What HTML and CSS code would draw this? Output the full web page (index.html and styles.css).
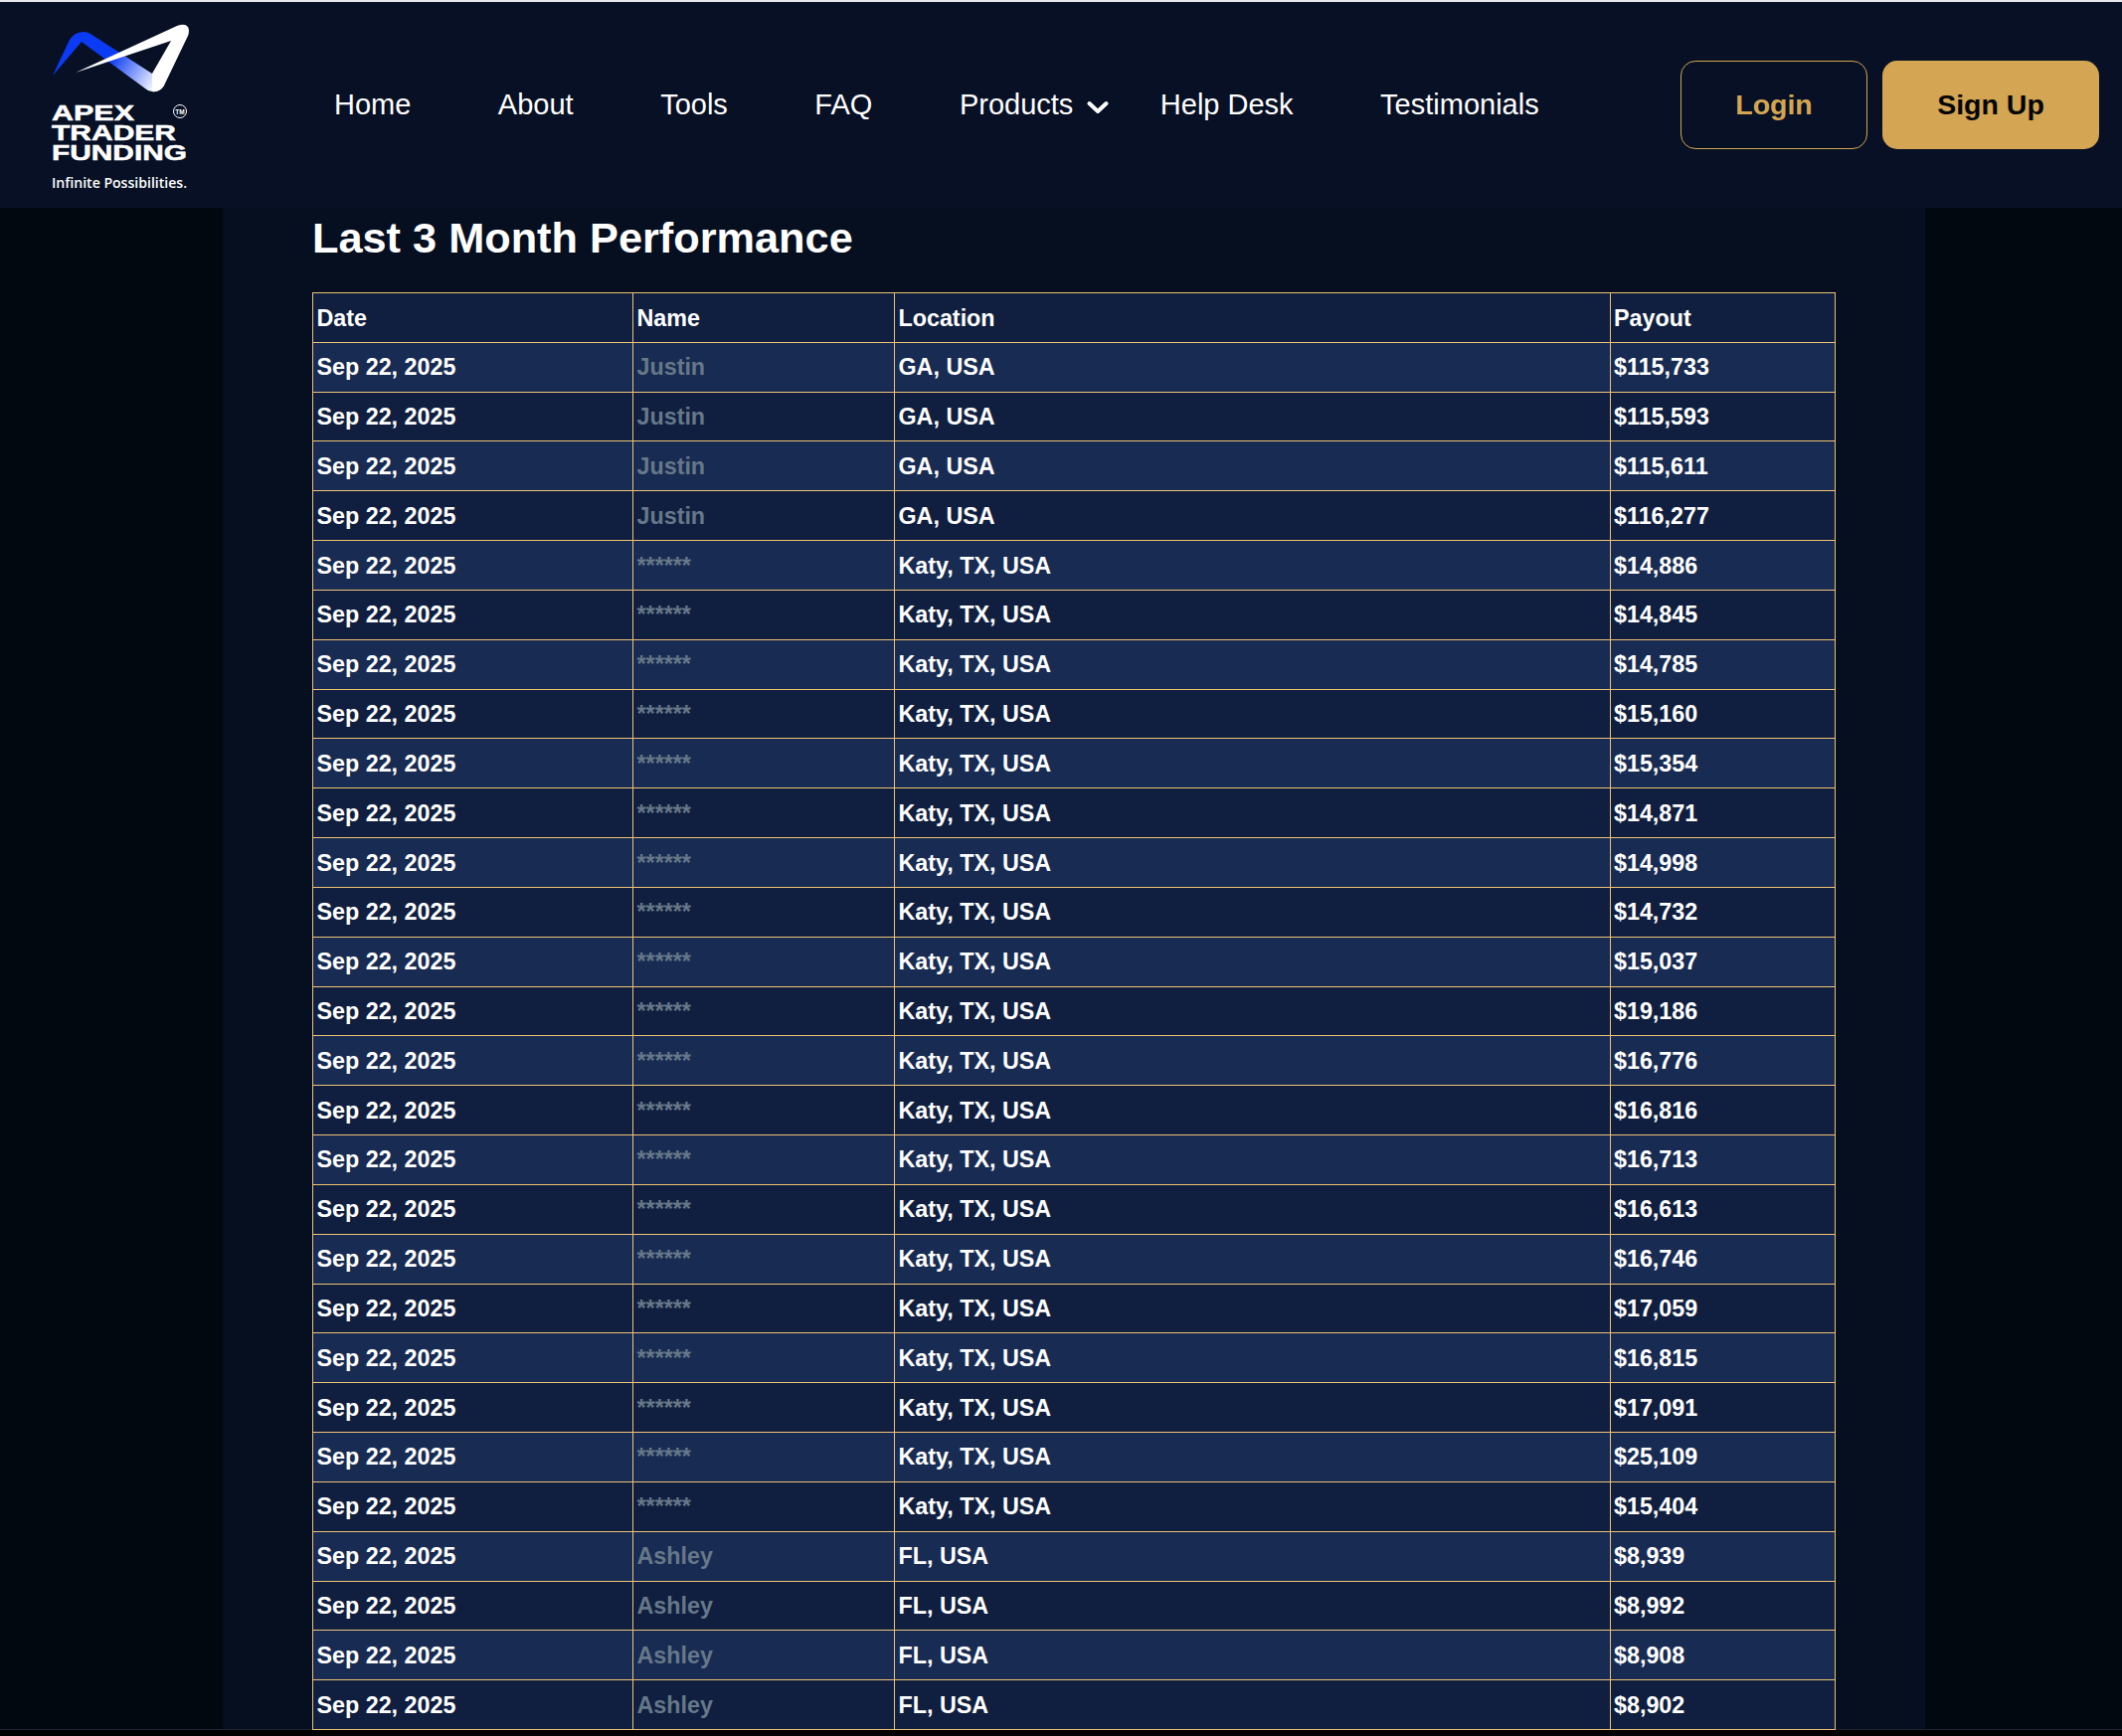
FILE: index.html
```html
<!DOCTYPE html>
<html lang="en">
<head>
    <meta charset="UTF-8">
    <meta name="viewport" content="width=device-width, initial-scale=1.0">
    <title>Last 3 Month Performance</title>
    <link rel="stylesheet" href="styles.css">
</head>
<body>
    <div class="page">
    <header class="site-header">
        <a class="logo" href="#">
            <svg class="logo-svg" width="142" height="176" viewBox="50 17 142 176">
                <defs>
                    <linearGradient id="bandFade" gradientUnits="userSpaceOnUse" x1="112" y1="58" x2="158" y2="86">
                        <stop offset="0" stop-color="#0b3bf5"/>
                        <stop offset="1" stop-color="#ffffff"/>
                    </linearGradient>
                </defs>
                <path fill="url(#bandFade)" d="M53 75 L69 41 Q74 31 84 31 Q89 31 94 35 L153 73 L165 85 Q160 92 153 91 Q149 91 146 88 L82 41 Z"/>
                <path fill="#fff" d="M76 72 L178 25 Q186 22 189 26 Q191 30 189 35 L165 85 Q161 92 153 91 L153 73 L172 40 Z"/>
                <text class="logo-word" x="52" y="120" textLength="83" lengthAdjust="spacingAndGlyphs">APEX</text>
                <text class="logo-word" x="52" y="140" textLength="125" lengthAdjust="spacingAndGlyphs">TRADER</text>
                <text class="logo-word" x="52" y="160" textLength="136" lengthAdjust="spacingAndGlyphs">FUNDING</text>
                <circle cx="181" cy="111" r="6.5" fill="none" stroke="#fff" stroke-width="1"/>
                <text class="logo-tm" x="181" y="113.5" text-anchor="middle">TM</text>
                <text class="logo-tag" x="52" y="188" textLength="136" lengthAdjust="spacingAndGlyphs">Infinite Possibilities.</text>
            </svg>
        </a>
        <nav class="main-nav">
            <a href="#">Home</a>
            <a href="#">About</a>
            <a href="#">Tools</a>
            <a href="#">FAQ</a>
            <a class="has-menu" href="#">Products
                <svg class="chevron" width="22" height="14" viewBox="0 0 22 14"><path d="M2.5 3 L11 11 L19.5 3" fill="none" stroke="#fff" stroke-width="4" stroke-linecap="round" stroke-linejoin="round"/></svg>
            </a>
            <a href="#">Help Desk</a>
            <a href="#">Testimonials</a>
        </nav>
        <div class="auth">
            <a class="btn btn-login" href="#">Login</a>
            <a class="btn btn-signup" href="#">Sign Up</a>
        </div>
    </header>

    <main class="panel">
        <h1>Last 3 Month Performance</h1>
        <table class="payouts">
            <colgroup>
                <col class="col-date">
                <col class="col-name">
                <col class="col-location">
                <col class="col-payout">
            </colgroup>
            <thead>
                <tr><th>Date</th><th>Name</th><th>Location</th><th>Payout</th></tr>
            </thead>
            <tbody>
                <tr><td>Sep 22, 2025</td><td class="name">Justin</td><td>GA, USA</td><td>$115,733</td></tr>
                <tr><td>Sep 22, 2025</td><td class="name">Justin</td><td>GA, USA</td><td>$115,593</td></tr>
                <tr><td>Sep 22, 2025</td><td class="name">Justin</td><td>GA, USA</td><td>$115,611</td></tr>
                <tr><td>Sep 22, 2025</td><td class="name">Justin</td><td>GA, USA</td><td>$116,277</td></tr>
                <tr><td>Sep 22, 2025</td><td class="name">******</td><td>Katy, TX, USA</td><td>$14,886</td></tr>
                <tr><td>Sep 22, 2025</td><td class="name">******</td><td>Katy, TX, USA</td><td>$14,845</td></tr>
                <tr><td>Sep 22, 2025</td><td class="name">******</td><td>Katy, TX, USA</td><td>$14,785</td></tr>
                <tr><td>Sep 22, 2025</td><td class="name">******</td><td>Katy, TX, USA</td><td>$15,160</td></tr>
                <tr><td>Sep 22, 2025</td><td class="name">******</td><td>Katy, TX, USA</td><td>$15,354</td></tr>
                <tr><td>Sep 22, 2025</td><td class="name">******</td><td>Katy, TX, USA</td><td>$14,871</td></tr>
                <tr><td>Sep 22, 2025</td><td class="name">******</td><td>Katy, TX, USA</td><td>$14,998</td></tr>
                <tr><td>Sep 22, 2025</td><td class="name">******</td><td>Katy, TX, USA</td><td>$14,732</td></tr>
                <tr><td>Sep 22, 2025</td><td class="name">******</td><td>Katy, TX, USA</td><td>$15,037</td></tr>
                <tr><td>Sep 22, 2025</td><td class="name">******</td><td>Katy, TX, USA</td><td>$19,186</td></tr>
                <tr><td>Sep 22, 2025</td><td class="name">******</td><td>Katy, TX, USA</td><td>$16,776</td></tr>
                <tr><td>Sep 22, 2025</td><td class="name">******</td><td>Katy, TX, USA</td><td>$16,816</td></tr>
                <tr><td>Sep 22, 2025</td><td class="name">******</td><td>Katy, TX, USA</td><td>$16,713</td></tr>
                <tr><td>Sep 22, 2025</td><td class="name">******</td><td>Katy, TX, USA</td><td>$16,613</td></tr>
                <tr><td>Sep 22, 2025</td><td class="name">******</td><td>Katy, TX, USA</td><td>$16,746</td></tr>
                <tr><td>Sep 22, 2025</td><td class="name">******</td><td>Katy, TX, USA</td><td>$17,059</td></tr>
                <tr><td>Sep 22, 2025</td><td class="name">******</td><td>Katy, TX, USA</td><td>$16,815</td></tr>
                <tr><td>Sep 22, 2025</td><td class="name">******</td><td>Katy, TX, USA</td><td>$17,091</td></tr>
                <tr><td>Sep 22, 2025</td><td class="name">******</td><td>Katy, TX, USA</td><td>$25,109</td></tr>
                <tr><td>Sep 22, 2025</td><td class="name">******</td><td>Katy, TX, USA</td><td>$15,404</td></tr>
                <tr><td>Sep 22, 2025</td><td class="name">Ashley</td><td>FL, USA</td><td>$8,939</td></tr>
                <tr><td>Sep 22, 2025</td><td class="name">Ashley</td><td>FL, USA</td><td>$8,992</td></tr>
                <tr><td>Sep 22, 2025</td><td class="name">Ashley</td><td>FL, USA</td><td>$8,908</td></tr>
                <tr><td>Sep 22, 2025</td><td class="name">Ashley</td><td>FL, USA</td><td>$8,902</td></tr>
            </tbody>
        </table>
    </main>
    </div>
</body>
</html>
```

FILE: styles.css
```css
* {
    box-sizing: border-box;
}
body {
    margin: 0;
    height: 1746px;
    overflow: hidden;
    background: #000;
    font-family: "Liberation Sans", Arial, sans-serif;
    color: #fff;
}
a {
    color: inherit;
    text-decoration: none;
}
.page {
    height: 1740px;
    border-bottom: 1px solid #1c2333;
    background: #02080f;
}
.site-header {
    display: flex;
    align-items: center;
    height: 209px;
    padding: 0 23px 0 50px;
    border-top: 2px solid #e5e7eb;
    background: #071024;
}
.logo {
    display: flex;
    width: 286px;
    flex-shrink: 0;
}
.logo-word {
    font-family: "Liberation Sans", Arial, sans-serif;
    font-size: 22.5px;
    font-weight: 700;
    fill: #fff;
    stroke: #fff;
    stroke-width: 0.5px;
}
.logo-tm {
    font-family: "Liberation Sans", Arial, sans-serif;
    font-size: 6.5px;
    font-weight: 700;
    fill: #fff;
}
.logo-tag {
    font-family: "Open Sans", sans-serif;
    font-size: 15px;
    font-weight: 600;
    fill: #fff;
}
.main-nav {
    display: flex;
    align-items: center;
    gap: 87.5px;
    flex: 1;
    font-size: 29px;
}
.main-nav .has-menu {
    display: flex;
    align-items: center;
    gap: 14px;
    margin-right: -36px;
}
.chevron {
    margin-top: 4px;
}
.auth {
    display: flex;
    gap: 15px;
}
.btn {
    display: flex;
    align-items: center;
    justify-content: center;
    height: 89px;
    border-radius: 15px;
    font-size: 28.5px;
    font-weight: 700;
}
.btn-login {
    width: 188px;
    border: 1px solid #d4a552;
    color: #d4a552;
}
.btn-signup {
    width: 218px;
    background: #d4a552;
    color: #050505;
}
.panel {
    width: 1712px;
    height: 1530px;
    margin-left: 224px;
    padding: 0 90px;
    background: #060f20;
}
.panel h1 {
    margin: 0 0 25px;
    font-size: 43.3px;
    line-height: 60px;
    font-weight: 700;
}
.payouts {
    width: 1531px;
    table-layout: fixed;
    border-collapse: collapse;
    font-size: 23.3px;
    font-weight: 700;
}
.col-date { width: 322px; }
.col-name { width: 263px; }
.col-location { width: 719.5px; }
.col-payout { width: 226.5px; }
.payouts th, .payouts td {
    height: 49.83px;
    padding: 1px 3.5px 0;
    border: 1px solid #eec274;
    text-align: left;
    background: #101f3f;
}
.payouts th {
    padding-top: 2px;
}
.payouts tbody tr:nth-child(odd) td {
    background: #182b52;
}
.payouts .name {
    color: #667889;
}
```
